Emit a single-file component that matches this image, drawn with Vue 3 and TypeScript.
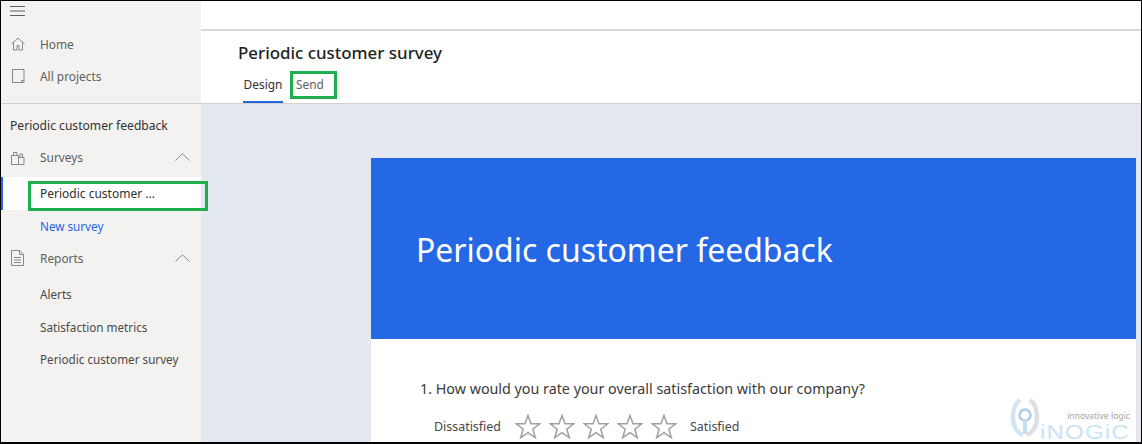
<script setup lang="ts">
const stars = [1, 2, 3, 4, 5]
</script>

<template>
  <div class="frame">
    <aside class="side">
      <div class="burger"><svg width="16" height="11" viewBox="0 0 16 11"><path d="M0 .5h15M0 5h15M0 9.500h15" stroke="#605e5c" fill="none" /></svg></div>
      <div class="nav">
        <div class="row"><svg class="ic" width="16" height="16" viewBox="0 0 16 16"><path d="M.5 8L7 2l6.500 6M2.500 6.500V14H6V9.500h2V14h3.500V6.500" stroke="#8a8886" fill="none" /></svg><span>Home</span></div>
        <div class="row"><svg class="ic" width="16" height="18" viewBox="0 0 16 18"><path d="M1.500 2.500h11.500v11.500M13 14v1.500H1.500v-13M10.500 15.500v-2H13" stroke="#8a8886" fill="none" /></svg><span>All projects</span></div>
      </div>
      <div class="section">
        <div class="title">Periodic customer feedback</div>
        <div class="row group"><svg class="ic" width="16" height="16" viewBox="0 0 16 16"><path d="M.5 6.500h7V15.500H.5zM7.500 8.500h5.500V15.500H7.500zM2.500 6.500V3.500h3.500v3M9 8.500V5h2.500v3.500" stroke="#8a8886" fill="none" /></svg><span>Surveys</span><svg class="chev" width="15" height="8" viewBox="0 0 15 8"><path d="M.5 7.500L7.500.8l7 6.700" stroke="#8a8886" fill="none" /></svg></div>
        <div class="sub active"><span class="mark"></span><span class="hl">Periodic customer ...</span></div>
        <div class="sub link">New survey</div>
        <div class="row group"><svg class="ic" width="16" height="16" viewBox="0 0 16 16"><path d="M.5.500h8l4 4v11H.5zM8.500.500v4h4M3 7.500h7M3 10h7M3 12.500h7" stroke="#8a8886" fill="none" /></svg><span>Reports</span><svg class="chev" width="15" height="8" viewBox="0 0 15 8"><path d="M.5 7.500L7.500.8l7 6.700" stroke="#8a8886" fill="none" /></svg></div>
        <div class="sub first">Alerts</div>
        <div class="sub">Satisfaction metrics</div>
        <div class="sub">Periodic customer survey</div>
      </div>
    </aside>
    <main class="main">
      <div class="topbar"></div>
      <header class="head">
        <h1>Periodic customer survey</h1>
        <div class="tabs">
          <div class="tab on">Design</div>
          <div class="tab send">Send</div>
        </div>
      </header>
      <div class="canvas">
        <section class="card">
          <div class="banner">Periodic customer feedback</div>
          <div class="body">
            <div class="q">1. How would you rate your overall satisfaction with our company?</div>
            <div class="rate">
              <span>Dissatisfied</span>
              <div class="stars">
                <svg v-for="s in stars" :key="s" width="26" height="25" viewBox="0 0 26 25"><path d="M13 1.500l3 8.300h8.800l-7 5.400 2.600 8.500L13 18.600l-7.400 5.100 2.600-8.500-7-5.400H10z" fill="none" stroke="#a0a0a0" stroke-width="1.500" /></svg>
              </div>
              <span>Satisfied</span>
            </div>
          </div>
        </section>
        <div class="logo">
          <svg width="30" height="40" viewBox="0 0 30 40"><path d="M10 2C4 6 3 13 3 20c0 9 5 15 10 17" fill="none" stroke="#d3e5f3" stroke-width="4.500" /><path d="M20 2c6 4 7 11 7 18 0 9-5 15-10 17" fill="none" stroke="#dcdfe3" stroke-width="4.500" /><circle cx="15" cy="17" r="5.500" fill="none" stroke="#aecde5" stroke-width="2.500" /><path d="M15 22v14" stroke="#c6dded" stroke-width="4" /></svg>
          <div class="brand">
            <span class="tag">innovative logic</span>
            <span class="name">iNOGiC</span>
          </div>
        </div>
      </div>
    </main>
  </div>
</template>

<style>
html, body { margin: 0; padding: 0; background: #fff; }
</style>

<style scoped>
.frame {
  width: 1142px;
  height: 444px;
  box-sizing: border-box;
  border: 1px solid #000;
  border-bottom-width: 2px;
  display: flex;
  overflow: hidden;
  font-family: "Noto Sans", "Open Sans", sans-serif;
  color: #323130;
}
.side {
  width: 200px;
  flex: none;
  background: #f3f2f1;
  font-size: 11.900px;
  color: #605e5c;
}
.burger {
  height: 22px;
  padding: 5px 0 0 9px;
  box-sizing: border-box;
}
.burger svg { display: block; }
.nav {
  padding: 5px 0 9px;
  height: 81px;
  box-sizing: border-box;
  border-bottom: 1px solid #d2d0ce;
}
.row {
  height: 32px;
  display: flex;
  align-items: center;
  padding-left: 10px;
}
.row span { margin-left: 13px; }
.ic { flex: none; }
.section { padding-top: 10px; }
.title {
  padding-left: 9px;
  height: 24px;
  line-height: 24px;
  color: #323130;
  font-size: 12.100px;
  margin-bottom: 3px;
}
.chev { margin-left: auto; margin-right: 11px; }
.sub {
  height: 32.500px;
  line-height: 32px;
  padding-left: 39px;
  position: relative;
  font-size: 11.700px;
  color: #4b4947;
}
.sub.active {
  background: #fff;
  color: #323130;
  font-size: 12px;
  margin-top: 4px;
  line-height: 34px;
}
.first { margin-top: 4px; }
.mark {
  position: absolute;
  left: 0;
  top: 0;
  bottom: 0;
  width: 2px;
  background: #2266e3;
}
.hl::before {
  content: "";
  position: absolute;
  left: 27px;
  top: 4px;
  width: 180px;
  height: 30px;
  box-sizing: border-box;
  border: 3px solid #1fae4e;
  z-index: 2;
}
.link { color: #2266e3; }
.main {
  flex: 1;
  min-width: 0;
  display: flex;
  flex-direction: column;
  background: #fff;
}
.topbar {
  height: 28px;
  flex: none;
  border-bottom: 2px solid #d8d8d8;
  box-sizing: content-box;
}
.head {
  height: 73px;
  flex: none;
  box-sizing: border-box;
  border-bottom: 1px solid #d2d0ce;
  padding-left: 37px;
}
.head h1 {
  margin: 0;
  padding-top: 10px;
  font-size: 16.900px;
  font-weight: 500;
  line-height: 24px;
  color: #201f1e;
}
.tabs {
  display: flex;
  margin-top: 6px;
  font-size: 11.900px;
}
.tab {
  height: 32px;
  line-height: 26px;
  box-sizing: border-box;
  position: relative;
}
.tab.on {
  margin-left: 5px;
  color: #323130;
  border-bottom: 2px solid #2266e3;
  width: 40px;
  text-align: center;
}
.tab.send {
  margin-left: 13px;
  color: #605e5c;
}
.tab.send::before {
  content: "";
  position: absolute;
  left: -6px;
  top: 0;
  width: 47px;
  height: 28px;
  box-sizing: border-box;
  border: 3px solid #1fae4e;
}
.canvas {
  flex: 1;
  min-height: 0;
  background: #e3e8f1;
  padding: 54px 5px 0 170px;
  position: relative;
}
.card {
  background: #fff;
  height: 100%;
}
.banner {
  height: 181px;
  background: #2468e5;
  color: #fff;
  font-size: 31.950px;
  display: flex;
  align-items: center;
  padding: 2px 0 0 45px;
  box-sizing: border-box;
}
.body { padding: 39px 0 0 49px; }
.q {
  font-size: 14.300px;
  line-height: 22px;
  color: #3b3a39;
}
.rate {
  display: flex;
  align-items: center;
  margin-top: 14px;
  padding-left: 14px;
  font-size: 12.430px;
  color: #484644;
}
.stars {
  display: flex;
  gap: 8px;
  margin: 0 13px 0 14px;
}
.stars svg { display: block; }
.logo {
  position: absolute;
  right: 11px;
  bottom: 2px;
  width: 120px;
  display: flex;
  align-items: flex-end;
  justify-content: space-between;
}
.logo svg { display: block; margin-bottom: 2px; }
.brand {
  width: 83px;
  display: flex;
  flex-direction: column;
  align-items: flex-end;
}
.tag {
  font-size: 8.600px;
  line-height: 9px;
  margin-bottom: 3px;
  color: #a5a5a5;
}
.name {
  font-size: 20px;
  line-height: 16px;
  letter-spacing: 1px;
  color: #c9e4f6;
  font-family: "Liberation Sans", sans-serif;
  transform: scaleX(1.2);
  transform-origin: right center;
}
</style>
